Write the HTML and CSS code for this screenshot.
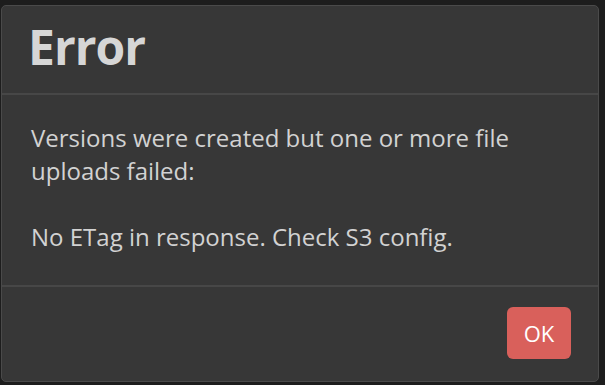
FILE: index.html
```html
<!DOCTYPE html>
<html>
<head>
<meta charset="utf-8">
<link rel="stylesheet" href="styles.css">
</head>
<body>
<div class="dialog">
  <div class="header"><h1 class="title">Error</h1></div>
  <div class="body">
    <p class="msg">Versions were created but one or more file uploads failed:</p>
    <p class="msg">No ETag in response. Check S3 config.</p>
  </div>
  <div class="footer"><button class="ok">OK</button></div>
</div>
</body>
</html>
```
FILE: styles.css
```css
html, body {
  margin: 0;
  padding: 0;
  background: #1d1d1d;
  width: 605px;
  height: 385px;
  overflow: hidden;
  font-family: "Open Sans", "Noto Sans", sans-serif;
}
.dialog {
  box-sizing: border-box;
  margin: 5px 0 0 1px;
  width: 598px;
  height: 377px;
  background: #373737;
  border: 1px solid #4a4a4a;
  border-radius: 5px;
  display: flex;
  flex-direction: column;
}
.header {
  box-sizing: border-box;
  height: 89px;
  border-bottom: 2px solid #474747;
  display: flex;
  align-items: center;
  padding: 0 0 5px 26px;
}
.title {
  margin: 0;
  font-size: 48px;
  font-weight: 700;
  color: #d6d6d6;
  line-height: 1;
  letter-spacing: -1px;
}
.body {
  height: 192px;
  box-sizing: border-box;
  padding: 26px 20px 0 29px;
  border-bottom: 2px solid #474747;
}
.msg {
  margin: 0 0 33px 0;
  font-size: 24px;
  line-height: 33px;
  color: #d2d2d2;
}
.footer {
  flex: 1;
  display: flex;
  justify-content: flex-end;
  align-items: flex-start;
  padding: 20px 27px 0 0;
}
.ok {
  width: 64px;
  height: 52px;
  border: none;
  border-radius: 6px;
  background: #d9605b;
  color: #ffffff;
  font-family: "Open Sans", "Noto Sans", sans-serif;
  font-size: 22px;
  padding: 0;
}
```
